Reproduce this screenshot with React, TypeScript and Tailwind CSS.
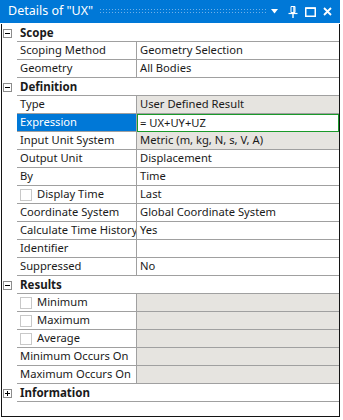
import React from 'react';

type Row =
  | { kind: 'cat'; label: string; open: boolean }
  | { kind: 'prop'; label: string; value?: string; grey?: boolean; check?: boolean; selected?: boolean };

const rows: Row[] = [
  { kind: 'cat', label: 'Scope', open: true },
  { kind: 'prop', label: 'Scoping Method', value: 'Geometry Selection' },
  { kind: 'prop', label: 'Geometry', value: 'All Bodies' },
  { kind: 'cat', label: 'Definition', open: true },
  { kind: 'prop', label: 'Type', value: 'User Defined Result', grey: true },
  { kind: 'prop', label: 'Expression', value: '= UX+UY+UZ', selected: true },
  { kind: 'prop', label: 'Input Unit System', value: 'Metric (m, kg, N, s, V, A)', grey: true },
  { kind: 'prop', label: 'Output Unit', value: 'Displacement' },
  { kind: 'prop', label: 'By', value: 'Time' },
  { kind: 'prop', label: 'Display Time', value: 'Last', check: true },
  { kind: 'prop', label: 'Coordinate System', value: 'Global Coordinate System' },
  { kind: 'prop', label: 'Calculate Time History', value: 'Yes' },
  { kind: 'prop', label: 'Identifier', value: '' },
  { kind: 'prop', label: 'Suppressed', value: 'No' },
  { kind: 'cat', label: 'Results', open: true },
  { kind: 'prop', label: 'Minimum', grey: true, check: true },
  { kind: 'prop', label: 'Maximum', grey: true, check: true },
  { kind: 'prop', label: 'Average', grey: true, check: true },
  { kind: 'prop', label: 'Minimum Occurs On', grey: true },
  { kind: 'prop', label: 'Maximum Occurs On', grey: true },
  { kind: 'cat', label: 'Information', open: false },
];

function Expander({ open }: { open: boolean }) {
  return (
    <svg width="9" height="9" viewBox="0 0 9 9" className="block">
      <rect x="0.5" y="0.5" width="8" height="8" fill="#fff" stroke="#8c8c8c" />
      <line x1="2" y1="4.5" x2="7" y2="4.5" stroke="#000" />
      {!open && <line x1="4.5" y1="2" x2="4.5" y2="7" stroke="#000" />}
    </svg>
  );
}

function Check() {
  return <div className="w-[12px] h-[12px] border border-[#c8c8c8] bg-white shrink-0" />;
}

export default function App() {
  return (
    <div
      className="w-[343px] h-[420px] bg-white text-[11.2px] text-[#1a1a1a] overflow-hidden"
      style={{ fontFamily: '"Noto Sans", "Open Sans", sans-serif' }}
    >
      {/* title bar */}
      <div className="w-[340px] h-[23px] bg-[#0078d7] flex items-center text-white pl-[8px] pr-[8px]">
        <span className="text-[12.5px] whitespace-nowrap">Details of "UX"</span>
        <div
          className="flex-1 h-[7px] ml-[6px] mr-[4px]"
          style={{
            backgroundImage: 'radial-gradient(circle, #6fb0e8 0.6px, transparent 0.7px)',
            backgroundSize: '3px 3px',
          }}
        />
        <svg width="8" height="5" viewBox="0 0 8 5" className="mr-[9px]">
          <path d="M0 0 H7 L3.5 4.5 Z" fill="#fff" />
        </svg>
        <svg width="10" height="12" viewBox="0 0 10 12" className="mr-[7px]">
          <path d="M3 0.5 H7 V6.5 H3 Z" fill="none" stroke="#fff" />
          <path d="M6 1 V6.5" stroke="#fff" strokeWidth="1.4" />
          <path d="M0.5 7.5 H9.5" stroke="#fff" strokeWidth="1.2" />
          <path d="M5 7.5 V12" stroke="#fff" strokeWidth="1.4" />
        </svg>
        <svg width="11" height="10" viewBox="0 0 11 10" className="mr-[7px]">
          <rect x="0.75" y="1" width="9.5" height="8.25" fill="none" stroke="#fff" strokeWidth="1.5" />
          <rect x="0.75" y="0.5" width="9.5" height="1.5" fill="#fff" />
        </svg>
        <svg width="9" height="9" viewBox="0 0 9 9">
          <path d="M1 1 L8 8 M8 1 L1 8" stroke="#fff" strokeWidth="1.8" />
        </svg>
      </div>

      {/* grid */}
      <div className="ml-px mt-px w-[339px] h-[393px] border-x border-b border-[#141414] bg-white">
        {rows.map((r, i) =>
          r.kind === 'cat' ? (
            <div key={i} className="flex h-[18px]">
              <div className="w-[15px] flex items-center pl-[1px]">
                <Expander open={r.open} />
              </div>
              <div className="flex-1 border-b border-[#a0a0a0] flex items-center pl-[3px] font-bold text-[11.5px]">
                {r.label}
              </div>
            </div>
          ) : (
            <div key={i} className="flex h-[18px]">
              <div className="w-[15px]" />
              <div
                className={`w-[120px] border-b border-r border-[#a0a0a0] flex items-center pl-[3px] whitespace-nowrap overflow-hidden ${
                  r.selected ? 'bg-[#0078d7] text-white' : 'bg-white'
                }`}
              >
                {r.check && (
                  <span className="mr-[5px] flex">
                    <Check />
                  </span>
                )}
                {r.label}
              </div>
              {r.selected ? (
                <div className="flex-1 border border-[#1a9a2a] bg-white flex items-center pl-[2px] whitespace-nowrap">
                  {r.value}
                </div>
              ) : (
                <div
                  className={`flex-1 border-b border-[#a0a0a0] flex items-center pl-[3px] whitespace-nowrap ${
                    r.grey ? 'bg-[#e6e4e0]' : 'bg-white'
                  }`}
                >
                  {r.value}
                </div>
              )}
            </div>
          )
        )}
      </div>
    </div>
  );
}
